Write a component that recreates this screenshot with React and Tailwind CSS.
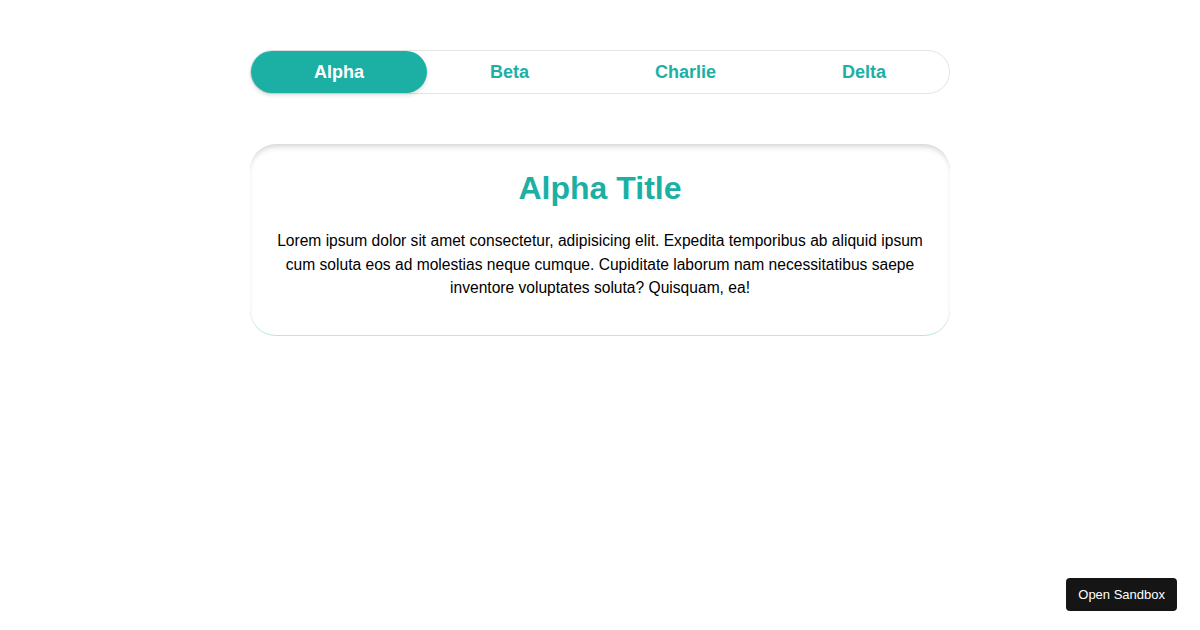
import { useState } from 'react';

const tabs = [
  {
    nombre: 'Alpha',
    titulo: 'Alpha Title',
    texto:
      'Lorem ipsum dolor sit amet consectetur, adipisicing elit. Expedita temporibus ab aliquid ipsum cum soluta eos ad molestias neque cumque. Cupiditate laborum nam necessitatibus saepe inventore voluptates soluta? Quisquam, ea!'
  },
  { nombre: 'Beta', titulo: 'Beta Title', texto: 'Lorem ipsum dolor sit amet consectetur, adipisicing elit.' },
  { nombre: 'Charlie', titulo: 'Charlie Title', texto: 'Lorem ipsum dolor sit amet consectetur, adipisicing elit.' },
  { nombre: 'Delta', titulo: 'Delta Title', texto: 'Lorem ipsum dolor sit amet consectetur, adipisicing elit.' }
];

export default function App() {
  const [activo, setActivo] = useState(0);
  const tab = tabs[activo];

  return (
    <div className="min-h-screen bg-white font-['Liberation_Sans',Arial,sans-serif]">
      <div className="w-[700px] mx-auto pt-[50px]">
        {/* barra de pestañas */}
        <div className="flex h-[44px] rounded-full border border-[#e4e4e4]">
          {tabs.map((t, i) => (
            <button
              key={t.nombre}
              onClick={() => setActivo(i)}
              className={`flex-auto h-[42px] rounded-full text-[18px] font-bold cursor-pointer ${
                i === activo
                  ? 'bg-[#1cb0a5] text-white shadow-[0_2px_4px_rgba(0,0,0,0.15)]'
                  : 'text-[#1cb0a5]'
              }`}
            >
              {t.nombre}
            </button>
          ))}
        </div>

        {/* contenido */}
        <div className="mt-[50px] rounded-[26px] px-6 pt-[25px] pb-[36px] text-center shadow-[inset_0_5px_6px_-3px_rgba(0,0,0,0.2),inset_0_-1px_0_rgba(28,176,165,0.3)]">
          <h1 className="text-[32px] font-bold text-[#1cb0a5] leading-[38px]">{tab.titulo}</h1>
          <p className="mt-[22px] text-[15.6px] leading-[23.5px] text-black">{tab.texto}</p>
        </div>
      </div>

      <button className="fixed right-[23px] bottom-[19px] h-[33px] px-[12px] rounded-[4px] bg-[#151515] text-[13px] text-white font-['Liberation_Sans',Arial,sans-serif]">
        Open Sandbox
      </button>
    </div>
  );
}
